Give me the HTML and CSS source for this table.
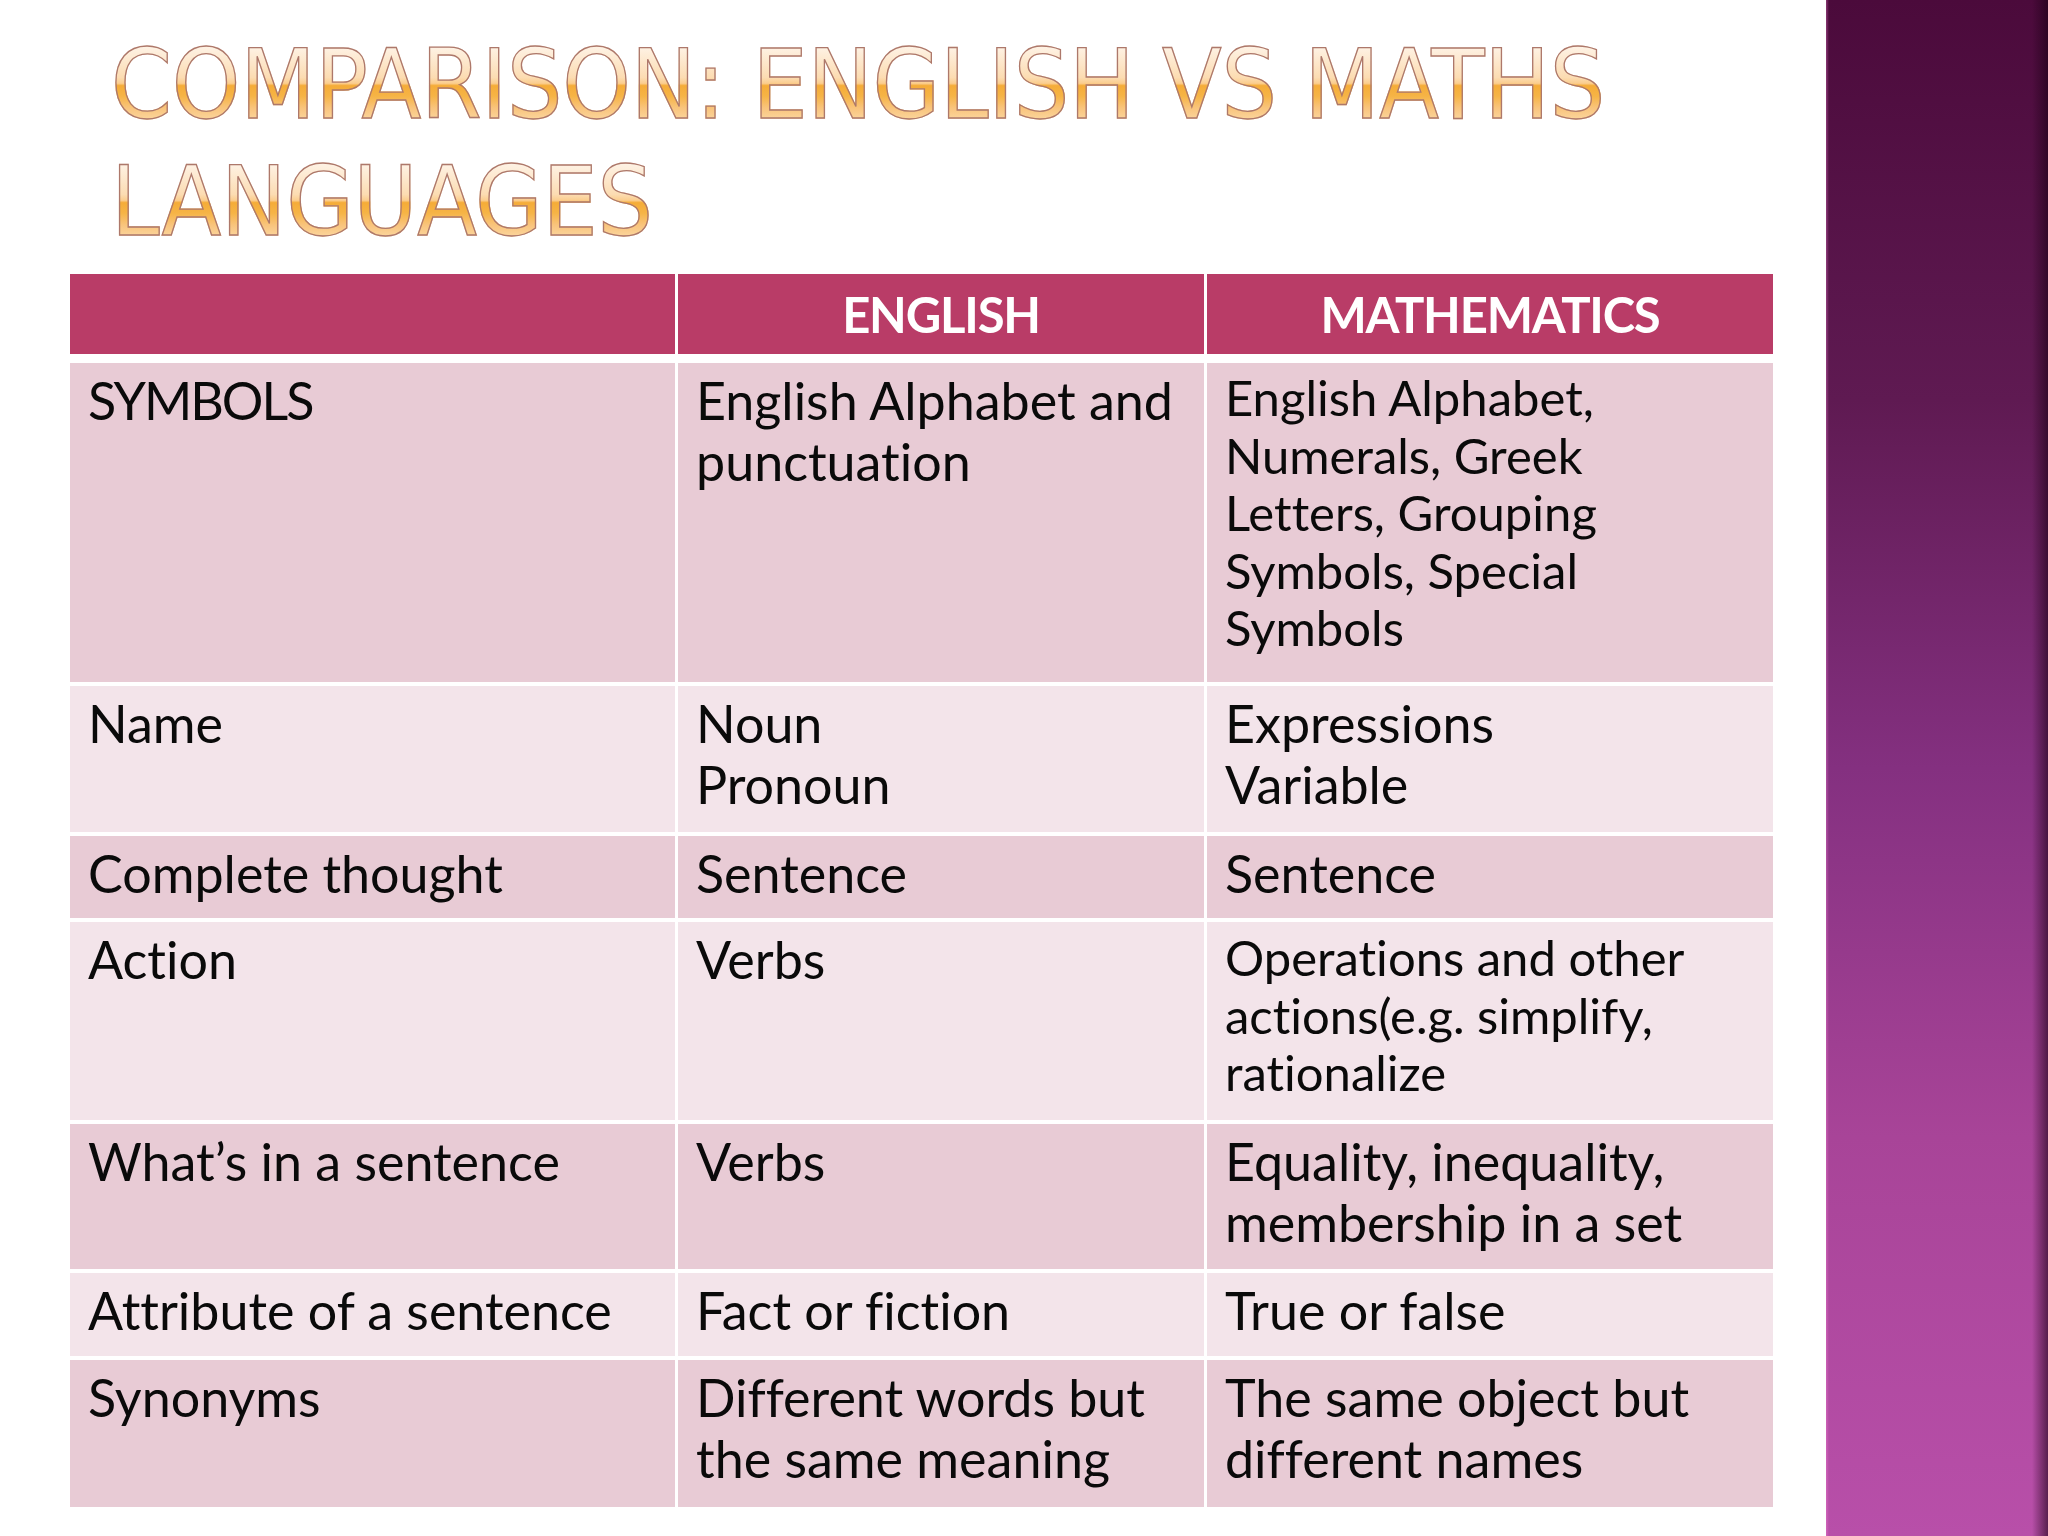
FILE: index.html
```html
<!DOCTYPE html>
<html lang="en">
<head>
<meta charset="utf-8">
<title>Comparison: English vs Maths Languages</title>
<link rel="stylesheet" href="styles.css">
</head>
<body>
<div class="slide">
  <main class="content">
    <h1 class="title">
      <span class="tline">COMPARISON: ENGLISH VS MATHS</span>
      <span class="tline">LANGUAGES</span>
    </h1>
    <table class="cmp">
      <colgroup>
        <col class="c1">
        <col class="c2">
        <col class="c3">
      </colgroup>
      <thead>
        <tr class="r-head"><th></th><th>ENGLISH</th><th>MATHEMATICS</th></tr>
      </thead>
      <tbody>
        <tr class="odd r-symbols">
          <td class="caps">SYMBOLS</td>
          <td>English Alphabet and punctuation</td>
          <td class="fit fit-a">English Alphabet,<br>Numerals, Greek<br>Letters, Grouping<br>Symbols, Special<br>Symbols</td>
        </tr>
        <tr class="even r-name">
          <td>Name</td>
          <td>Noun<br>Pronoun</td>
          <td>Expressions<br>Variable</td>
        </tr>
        <tr class="odd r-complete">
          <td>Complete thought</td>
          <td>Sentence</td>
          <td>Sentence</td>
        </tr>
        <tr class="even r-action">
          <td>Action</td>
          <td>Verbs</td>
          <td class="fit fit-b">Operations and other<br>actions(e.g. simplify,<br>rationalize</td>
        </tr>
        <tr class="odd r-whats">
          <td>What’s in a sentence</td>
          <td>Verbs</td>
          <td>Equality, inequality,<br>membership in a set</td>
        </tr>
        <tr class="even r-attr">
          <td>Attribute of a sentence</td>
          <td>Fact or fiction</td>
          <td>True or false</td>
        </tr>
        <tr class="odd r-syn">
          <td>Synonyms</td>
          <td>Different words but<br>the same meaning</td>
          <td>The same object but<br>different names</td>
        </tr>
      </tbody>
    </table>
  </main>
  <aside class="band"></aside>
</div>
</body>
</html>
```

FILE: styles.css
```css
html, body {
  margin: 0;
  padding: 0;
}

body {
  width: 2048px;
  height: 1536px;
  overflow: hidden;
  background: #ffffff;
  font-family: Lato, "Open Sans", "Liberation Sans", sans-serif;
  font-variant-ligatures: none;
}

.slide {
  display: flex;
  width: 2048px;
  height: 1536px;
}

.content {
  flex: none;
  width: 1826px;
}

/* ---------- title ---------- */
.title {
  margin: 26px 0 0 111px;
  padding: 0;
  font-family: "DejaVu Sans Condensed", "DejaVu Sans", sans-serif;
  font-stretch: condensed;
  font-weight: normal;
  font-size: 97px;
  line-height: 117px;
  letter-spacing: -0.2px;
}

.tline {
  display: block;
  width: max-content;
  color: transparent;
  background: linear-gradient(to bottom,
    #fff7ee 0%,
    #fef2e4 18%,
    #fcdcb2 44%,
    #fbcd8e 49%,
    #f5ac38 51%,
    #f6b446 60%,
    #f9c47c 70%,
    #fbd59c 80%,
    #fbd9a5 100%);
  -webkit-background-clip: text;
  background-clip: text;
  -webkit-text-stroke: 1.3px #ad786b;
}

/* ---------- table ---------- */
.cmp {
  margin: 10px 0 0 67px;
  width: 1709px;
  table-layout: fixed;
  border-collapse: separate;
  border-spacing: 3px 4px;
}

.c1 { width: 605px; }
.c2 { width: 526px; }
.c3 { width: 566px; }

.cmp th {
  padding: 0;
  background: #b93c67;
  background-clip: padding-box;
  border-bottom: 5px solid #ffffff;
  color: #ffffff;
  font-weight: 700;
  font-size: 49px;
  letter-spacing: -1.2px;
  line-height: 61px;
  text-align: center;
  vertical-align: middle;
}

.cmp td {
  padding: 7px 18px 0 18px;
  vertical-align: top;
  color: #0a0a0a;
  font-size: 52px;
  line-height: 61px;
}

.cmp td.caps {
  letter-spacing: -2px;
}

.odd td { background: #e8cbd5; }
.even td { background: #f3e4ea; }

.cmp td.fit {
  font-size: 49px;
  line-height: 57.5px;
}
.cmp td.fit-a { padding-top: 6px; }
.cmp td.fit-b { padding-top: 7px; }

.r-head { height: 85px; }
.r-symbols { height: 319px; }
.r-name { height: 146px; }
.r-complete { height: 82px; }
.r-action { height: 198px; }
.r-whats { height: 145px; }
.r-attr { height: 83px; }
.r-syn { height: 147px; }

/* ---------- right band ---------- */
.band {
  flex: 1;
  background:
    linear-gradient(to right, rgba(255, 140, 220, 0.35) 0, rgba(255, 140, 220, 0) 3px),
    linear-gradient(to right, rgba(0, 0, 0, 0) calc(100% - 16px), rgba(25, 0, 18, 0.6) 100%),
    linear-gradient(to bottom, #4b0a3b 0%, #5f1a52 26%, #843080 50%, #a84498 74%, #b84fa9 100%);
}
```
